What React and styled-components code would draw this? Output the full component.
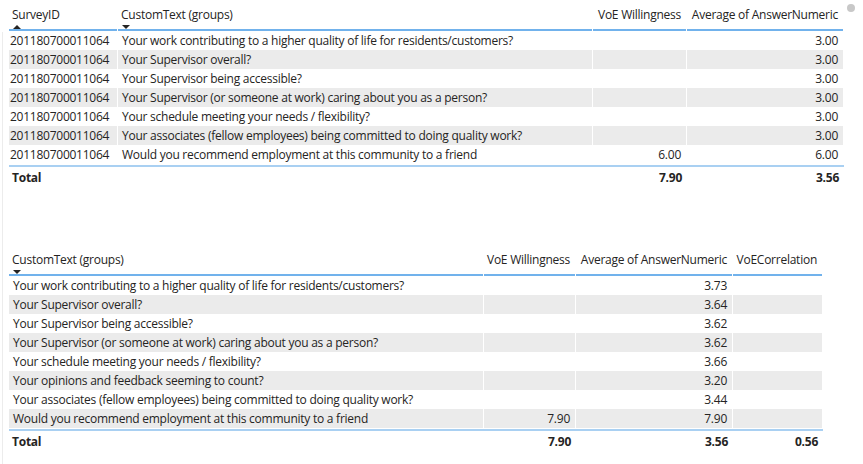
import React from 'react'
import styled, { createGlobalStyle } from 'styled-components'

const GlobalStyle = createGlobalStyle`
  body {
    margin: 0;
    background: #fff;
    font-family: "Open Sans", "Liberation Sans", sans-serif;
    color: #252423;
  }
`

const Page = styled.div`
  position: relative;
  width: 863px;
  height: 464px;
  overflow: hidden;
  display: flex;
  flex-direction: column;
  padding-left: 9px;
  box-sizing: border-box;
`

const EdgeLine = styled.div`
  position: absolute;
  left: 2px;
  top: 32px;
  bottom: 0;
  width: 1px;
  background: #ececec;
`

const ScrollDot = styled.div`
  position: absolute;
  left: 847px;
  top: 4px;
  width: 8px;
  height: 8px;
  border-radius: 50%;
  background: #c8c8c8;
`

const Table = styled.div`
  display: grid;
  grid-template-columns: ${(p) => p.cols};
  column-gap: 1px;
  width: max-content;
  margin-top: ${(p) => p.top || 0}px;
  font-size: 12px;
  letter-spacing: -0.25px;
`

const HeadCell = styled.div`
  display: flex;
  flex-direction: column;
  align-items: ${(p) => (p.num ? 'flex-end' : 'flex-start')};
  padding: 5px 5px 0 3px;
  height: 31px;
  box-sizing: border-box;
  border-bottom: 2px solid #71b2ec;
  white-space: nowrap;
  line-height: 19px;
`

const Arrow = styled.span`
  display: block;
  width: 0;
  height: 0;
  margin-top: 1px;
  margin-left: 1px;
  border-left: 4px solid transparent;
  border-right: 4px solid transparent;
  ${(p) =>
    p.up
      ? 'border-bottom: 4px solid #252423;'
      : 'border-top: 4px solid #252423;'}
`

const Cell = styled.div`
  height: 19px;
  line-height: 19px;
  padding: 0 5px 0 ${(p) => (p.num ? 5 : p.tight ? 1 : 4)}px;
  text-align: ${(p) => (p.num ? 'right' : 'left')};
  background: ${(p) => (p.shade ? '#ebebeb' : '#fff')};
  white-space: nowrap;
  overflow: hidden;
`

const TotalCell = styled.div`
  height: 21px;
  line-height: 19px;
  padding: 1px 5px 0 ${(p) => (p.num ? 5 : 3)}px;
  box-sizing: border-box;
  text-align: ${(p) => (p.num ? 'right' : 'left')};
  font-weight: 700;
  border-top: 2px solid #a9d0f2;
  margin-right: -1px;
  margin-top: 1px;
`

const questions = [
  'Your work contributing to a higher quality of life for residents/customers?',
  'Your Supervisor overall?',
  'Your Supervisor being accessible?',
  'Your Supervisor (or someone at work) caring about you as a person?',
  'Your schedule meeting your needs / flexibility?',
  'Your associates (fellow employees) being committed to doing quality work?',
  'Would you recommend employment at this community to a friend',
]

const surveyRows = questions.map((q, i) => ({
  id: '201180700011064',
  text: q,
  voe: i === 6 ? '6.00' : '',
  avg: i === 6 ? '6.00' : '3.00',
}))

const groupRows = [
  { text: questions[0], voe: '', avg: '3.73' },
  { text: questions[1], voe: '', avg: '3.64' },
  { text: questions[2], voe: '', avg: '3.62' },
  { text: questions[3], voe: '', avg: '3.62' },
  { text: questions[4], voe: '', avg: '3.66' },
  { text: 'Your opinions and feedback seeming to count?', voe: '', avg: '3.20' },
  { text: questions[5], voe: '', avg: '3.44' },
  { text: questions[6], voe: '7.90', avg: '7.90' },
]

function SurveyTable() {
  return (
    <Table cols="108px 474px 93px 156px">
      <HeadCell>
        SurveyID
        <Arrow up />
      </HeadCell>
      <HeadCell>
        CustomText (groups)
        <Arrow />
      </HeadCell>
      <HeadCell num>VoE Willingness</HeadCell>
      <HeadCell num>Average of AnswerNumeric</HeadCell>
      {surveyRows.map((r, i) => (
        <React.Fragment key={i}>
          <Cell tight shade={i % 2 === 1}>{r.id}</Cell>
          <Cell shade={i % 2 === 1}>{r.text}</Cell>
          <Cell num shade={i % 2 === 1}>{r.voe}</Cell>
          <Cell num shade={i % 2 === 1}>{r.avg}</Cell>
        </React.Fragment>
      ))}
      <TotalCell>Total</TotalCell>
      <TotalCell />
      <TotalCell num>7.90</TotalCell>
      <TotalCell num>3.56</TotalCell>
    </Table>
  )
}

function GroupTable() {
  return (
    <Table cols="474px 91px 156px 89px" top={59}>
      <HeadCell>
        CustomText (groups)
        <Arrow />
      </HeadCell>
      <HeadCell num>VoE Willingness</HeadCell>
      <HeadCell num>Average of AnswerNumeric</HeadCell>
      <HeadCell num>VoECorrelation</HeadCell>
      {groupRows.map((r, i) => (
        <React.Fragment key={i}>
          <Cell shade={i % 2 === 1}>{r.text}</Cell>
          <Cell num shade={i % 2 === 1}>{r.voe}</Cell>
          <Cell num shade={i % 2 === 1}>{r.avg}</Cell>
          <Cell num shade={i % 2 === 1}></Cell>
        </React.Fragment>
      ))}
      <TotalCell>Total</TotalCell>
      <TotalCell num>7.90</TotalCell>
      <TotalCell num>3.56</TotalCell>
      <TotalCell num>0.56</TotalCell>
    </Table>
  )
}

export default function App() {
  return (
    <Page>
      <GlobalStyle />
      <EdgeLine />
      <ScrollDot />
      <SurveyTable />
      <GroupTable />
    </Page>
  )
}
